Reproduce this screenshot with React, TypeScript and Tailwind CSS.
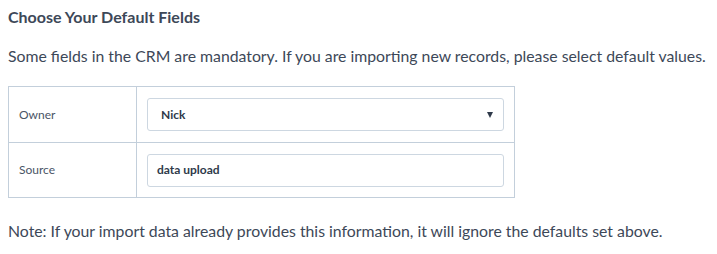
import React from 'react';

const fields = [
  { label: 'Owner', value: 'Nick', select: true },
  { label: 'Source', value: 'data upload', select: false },
];

const App = () => {
  return (
    <div className="w-[717px] h-[254px] bg-white px-2 pt-[7px] text-[#3d4858] font-['Lato','Liberation_Sans',sans-serif]">
      <h3 className="text-[16px] font-bold leading-[20px]">Choose Your Default Fields</h3>

      <p className="mt-[19px] whitespace-nowrap text-[15.8px] leading-[20px]">
        Some fields in the CRM are mandatory. If you are importing new records, please select default values.
      </p>

      <div className="mt-[20px] w-[507px] border border-[#c3cfdb]">
        {fields.map((f, i) => (
          <div key={f.label} className={`flex h-[55px] ${i > 0 ? 'border-t border-[#c3cfdb]' : ''}`}>
            <div className="flex w-[128px] items-center border-r border-[#c3cfdb] px-[10px] text-[12px] text-[#4a5566]">
              {f.label}
            </div>
            <div className="flex flex-1 items-center px-[10px]">
              {f.select ? (
                <div className="relative flex h-[33px] w-full items-center rounded-[3px] border border-[#cdd7e1] pl-[13px] text-[12px] font-bold text-[#2f3a4a]">
                  {f.value}
                  <span className="absolute right-[10px] top-[13px] h-0 w-0 border-x-[3.5px] border-t-[6px] border-x-transparent border-t-[#2f3a4a]" />
                </div>
              ) : (
                <div className="flex h-[33px] w-full items-center rounded-[3px] border border-[#cdd7e1] pl-[9px] text-[12px] font-bold text-[#2f3a4a]">
                  {f.value}
                </div>
              )}
            </div>
          </div>
        ))}
      </div>

      <p className="mt-[23px] whitespace-nowrap text-[15.8px] leading-[20px]">
        Note: If your import data already provides this information, it will ignore the defaults set above.
      </p>
    </div>
  );
};

export default App;
